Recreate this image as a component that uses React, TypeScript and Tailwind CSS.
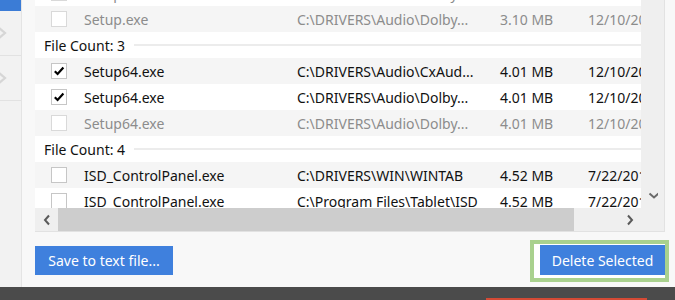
import React from 'react'

type Row = {
  name: string
  path: string
  size: string
  date: string
  checked?: boolean
  muted?: boolean
}

type Item = { kind: 'row'; row: Row } | { kind: 'header'; label: string }

const items: Item[] = [
  { kind: 'row', row: { name: 'Setup.exe', path: 'C:\\DRIVERS\\Audio\\Dolby...', size: '3.10 MB', date: '12/10/2015', muted: true } },
  { kind: 'row', row: { name: 'Setup.exe', path: 'C:\\DRIVERS\\Audio\\Dolby...', size: '3.10 MB', date: '12/10/2015', muted: true } },
  { kind: 'header', label: 'File Count: 3' },
  { kind: 'row', row: { name: 'Setup64.exe', path: 'C:\\DRIVERS\\Audio\\CxAud...', size: '4.01 MB', date: '12/10/2015', checked: true } },
  { kind: 'row', row: { name: 'Setup64.exe', path: 'C:\\DRIVERS\\Audio\\Dolby...', size: '4.01 MB', date: '12/10/2015', checked: true } },
  { kind: 'row', row: { name: 'Setup64.exe', path: 'C:\\DRIVERS\\Audio\\Dolby...', size: '4.01 MB', date: '12/10/2015', muted: true } },
  { kind: 'header', label: 'File Count: 4' },
  { kind: 'row', row: { name: 'ISD_ControlPanel.exe', path: 'C:\\DRIVERS\\WIN\\WINTAB', size: '4.52 MB', date: '7/22/2015' } },
  { kind: 'row', row: { name: 'ISD_ControlPanel.exe', path: 'C:\\Program Files\\Tablet\\ISD', size: '4.52 MB', date: '7/22/2015' } },
]

function Checkbox({ checked, muted }: { checked?: boolean; muted?: boolean }) {
  return (
    <div
      className={`w-[16px] h-[16px] bg-white border flex items-center justify-center ${
        muted ? 'border-[#d9d9d9]' : 'border-[#c6c6c6]'
      }`}
    >
      {checked && (
        <svg width="12" height="12" viewBox="0 0 12 12">
          <path d="M1.8 6.2 L4.6 9 L10.4 2.6" fill="none" stroke="#000" strokeWidth="2.2" />
        </svg>
      )}
    </div>
  )
}

function Chevron({ dir, color = '#5a5a5a' }: { dir: 'left' | 'right' | 'down'; color?: string }) {
  const d =
    dir === 'left' ? 'M7 1.5 L3 6 L7 10.5' : dir === 'right' ? 'M3 1.5 L7 6 L3 10.5' : 'M1.5 3.5 L6 7.5 L10.5 3.5'
  return (
    <svg width="10" height="12" viewBox="0 0 10 12">
      <path d={d} fill="none" stroke={color} strokeWidth="2" />
    </svg>
  )
}

export default function App() {
  return (
    <div
      className="w-[675px] h-[300px] flex flex-col overflow-hidden text-[14px] bg-[#f8f8f8]"
      style={{ fontFamily: '"Segoe UI", "Noto Sans", sans-serif' }}
    >
      <div className="flex flex-1 min-h-0">
        {/* Sidebar */}
        <div className="w-[23px] bg-[#f2f2f2] border-r border-[#e4e4e4] flex flex-col">
          <div className="h-[11px] bg-[#3b7cd6]" />
          {[0, 1].map((i) => (
            <div key={i} className="h-[45px] border-b border-[#e2e2e2] flex items-center -ml-[4px]">
              <svg width="12" height="16" viewBox="0 0 12 16">
                <path d="M2 2 L9 8 L2 14" fill="none" stroke="#d6d6d6" strokeWidth="2.2" />
              </svg>
            </div>
          ))}
        </div>

        {/* Main */}
        <div className="flex-1 pl-[13px] pr-[10px] flex flex-col">
          <div className="flex flex-col border-r border-b border-[#e2e2e2] w-[630px]">
            <div className="flex h-[208px]">
              <div className="w-[606px] overflow-hidden bg-white">
                <div className="-mt-[20px]">
                  {items.map((it, i) =>
                    it.kind === 'header' ? (
                      <div key={i} className="h-[26px] flex items-center bg-white pl-[9px]">
                        <span className="text-[#111]">{it.label}</span>
                        <div className="flex-1 ml-[9px] h-[2px] bg-[#ececec]" />
                      </div>
                    ) : (
                      <div
                        key={i}
                        className={`h-[26px] grid grid-cols-[49px_213px_203px_88px_1fr] items-center whitespace-nowrap ${
                          [1, 3, 5, 7].includes(i) ? 'bg-[#f5f5f5]' : 'bg-white'
                        } ${it.row.muted ? 'text-[#8c8c8c]' : 'text-[#111]'}`}
                      >
                        <div className="pl-[16px]">
                          <Checkbox checked={it.row.checked} muted={it.row.muted} />
                        </div>
                        <div>{it.row.name}</div>
                        <div>{it.row.path}</div>
                        <div>{it.row.size}</div>
                        <div className="overflow-hidden">{it.row.date}</div>
                      </div>
                    )
                  )}
                </div>
              </div>
              {/* Vertical scrollbar */}
              <div className="w-[23px] bg-[#efefef] flex flex-col justify-end items-center pb-[6px]">
                <Chevron dir="down" color="#6a6a6a" />
              </div>
            </div>
            {/* Horizontal scrollbar */}
            <div className="h-[23px] flex bg-[#efefef]">
              <div className="w-[23px] flex items-center justify-center">
                <Chevron dir="left" />
              </div>
              <div className="w-[516px] bg-[#cdcdcd]" />
              <div className="w-[67px] flex items-center justify-end pr-[6px]">
                <Chevron dir="right" />
              </div>
              <div className="w-[23px]" />
            </div>
          </div>

          {/* Buttons */}
          <div className="flex justify-between items-start">
            <button className="mt-[14px] w-[138px] h-[29px] bg-[#3f80dd] text-white text-[14px]">
              Save to text file...
            </button>
            <div className="mt-[8px] -mr-[4px] border-[4px] border-[#a9d18e] bg-white pl-[6px] pt-[1px] pb-[3px]">
              <button className="w-[125px] h-[30px] bg-[#3f80dd] text-white text-[14px]">Delete Selected</button>
            </div>
          </div>
        </div>
      </div>

      {/* Bottom bar */}
      <div className="h-[13px] bg-[#4b4b4b] flex items-end">
        <div className="ml-[486px] w-[161px] h-[2px] bg-[#d44a35]" />
      </div>
    </div>
  )
}
